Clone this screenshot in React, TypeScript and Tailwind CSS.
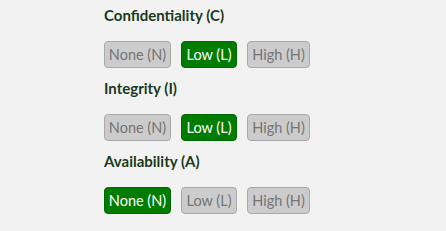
const groups = [
  { title: 'Confidentiality (C)', selected: 1 },
  { title: 'Integrity (I)', selected: 1 },
  { title: 'Availability (A)', selected: 0 },
];

const options = [
  { label: 'None (N)', width: 'w-[67px]' },
  { label: 'Low (L)', width: 'w-[56px]' },
  { label: 'High (H)', width: 'w-[63px]' },
];

export default function App() {
  return (
    <div
      className="w-[446px] h-[231px] bg-[#f2f2f2] pl-[104px] pt-[5px] flex flex-col gap-[10px]"
      style={{ fontFamily: 'Lato, "Noto Sans", sans-serif' }}
    >
      {groups.map((g) => (
        <div key={g.title}>
          <h3 className="text-[15px] leading-[20px] font-bold text-[#1b3a1b] mb-[16px]">{g.title}</h3>
          <div className="flex gap-[10px]">
            {options.map((o, i) =>
              i === g.selected ? (
                <button
                  key={o.label}
                  className={`${o.width} h-[27px] rounded-[4px] border border-[#006a00] bg-[#007c00] text-white text-[14.5px] text-center`}
                >
                  {o.label}
                </button>
              ) : (
                <button
                  key={o.label}
                  className={`${o.width} h-[27px] rounded-[4px] border border-[#a9a9a9] bg-[#cccccc] text-[#757575] text-[14.5px] text-center`}
                >
                  {o.label}
                </button>
              )
            )}
          </div>
        </div>
      ))}
    </div>
  );
}
